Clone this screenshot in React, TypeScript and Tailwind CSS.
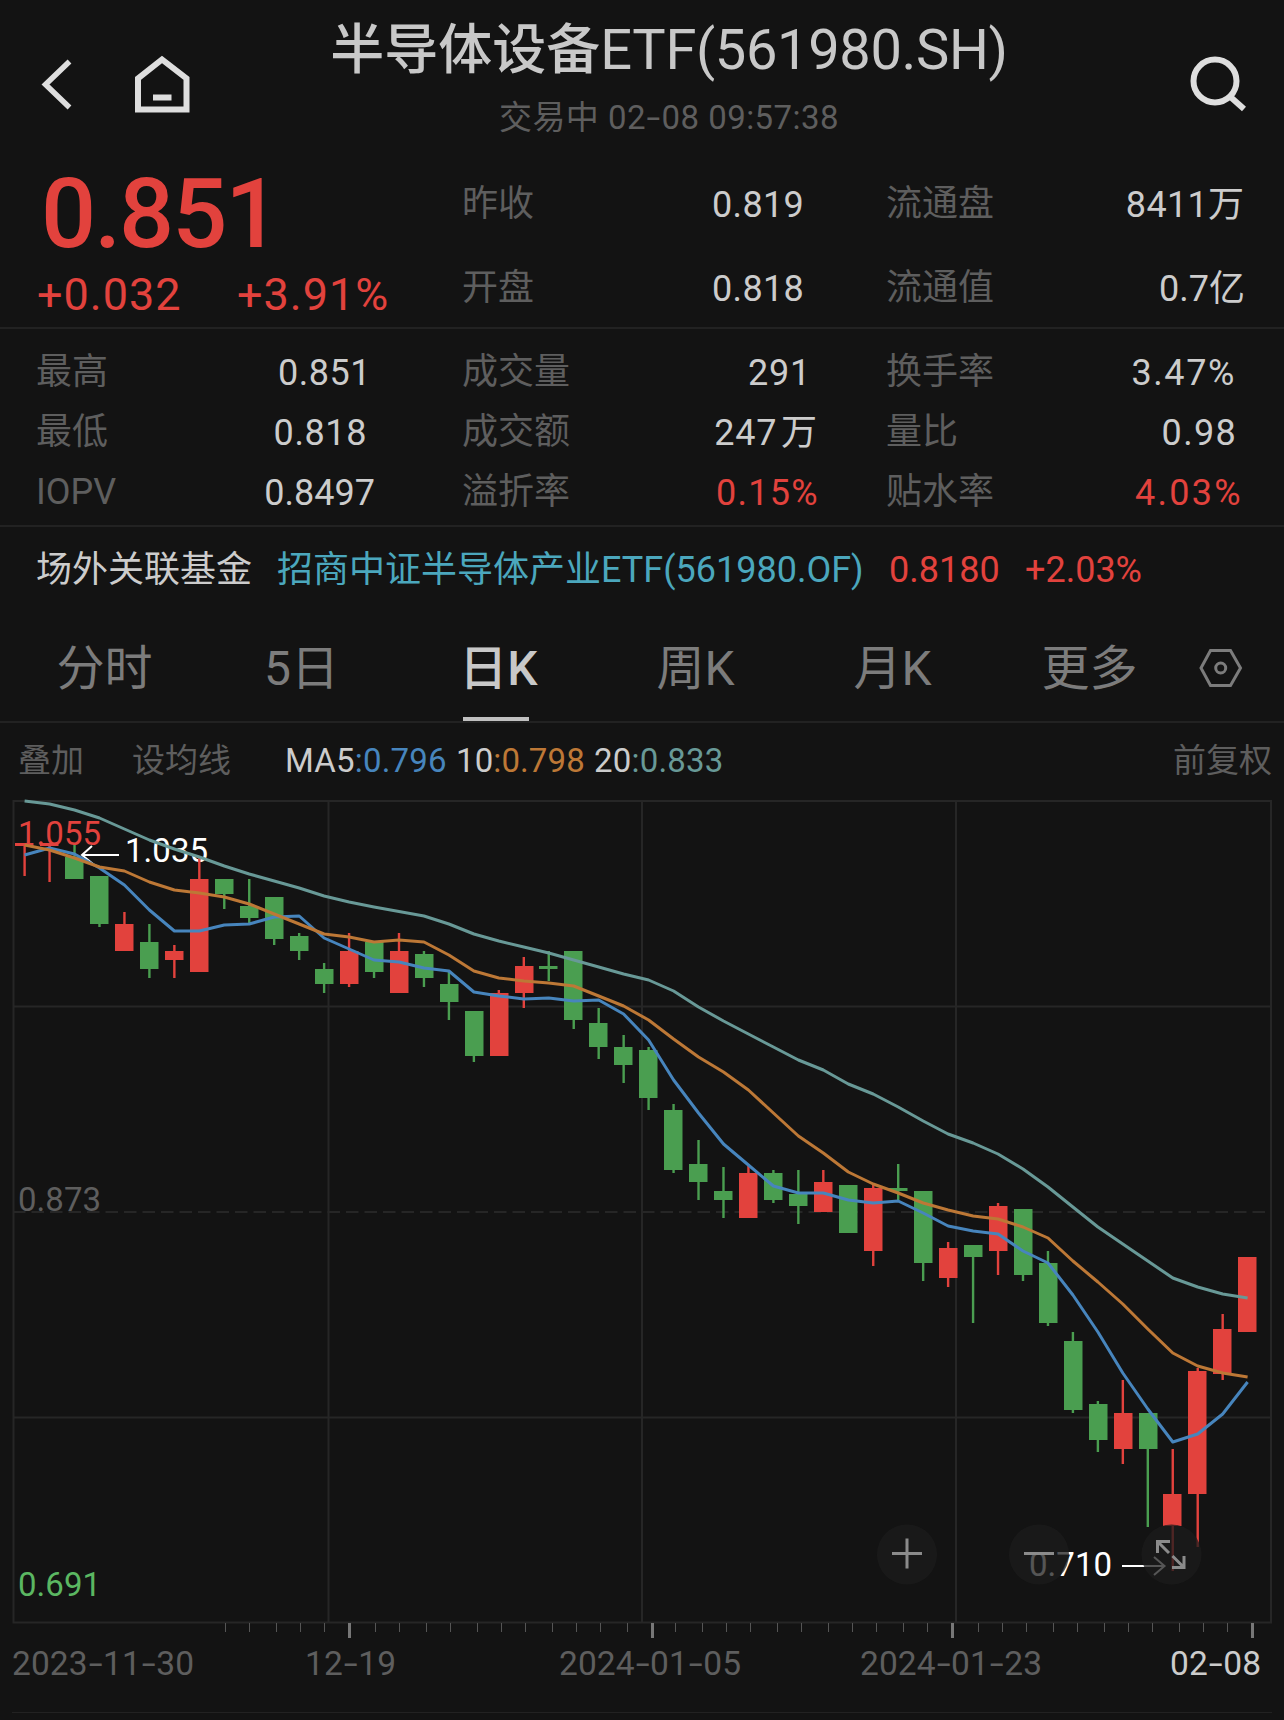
import { Fragment } from "react"

type Candle = [high: number, top: number, bottom: number, low: number, color: "r" | "g"]

const RED = "#e2423d"
const GREEN = "#4a9e50"

const candles: Candle[] = [
  [843, 843, 846, 876, "r"],
  [843, 843, 846, 882, "r"],
  [845, 857, 879, 879, "g"],
  [876, 876, 924, 927, "g"],
  [912, 924, 951, 951, "r"],
  [924, 942, 969, 978, "g"],
  [945, 951, 960, 978, "r"],
  [857, 879, 972, 972, "r"],
  [879, 879, 894, 909, "g"],
  [879, 906, 918, 924, "g"],
  [897, 897, 939, 945, "g"],
  [933, 936, 951, 960, "g"],
  [963, 969, 984, 993, "g"],
  [933, 951, 984, 987, "r"],
  [942, 942, 972, 978, "g"],
  [933, 951, 993, 993, "r"],
  [951, 954, 978, 987, "g"],
  [972, 984, 1002, 1020, "g"],
  [1011, 1011, 1056, 1062, "g"],
  [990, 993, 1056, 1056, "r"],
  [957, 966, 993, 1008, "r"],
  [951, 966, 969, 981, "g"],
  [951, 951, 1020, 1029, "g"],
  [1008, 1023, 1047, 1059, "g"],
  [1035, 1047, 1065, 1083, "g"],
  [1047, 1050, 1098, 1110, "g"],
  [1104, 1110, 1170, 1173, "g"],
  [1140, 1164, 1182, 1200, "g"],
  [1167, 1191, 1200, 1218, "g"],
  [1164, 1173, 1218, 1218, "r"],
  [1170, 1173, 1200, 1203, "g"],
  [1170, 1194, 1206, 1224, "g"],
  [1170, 1182, 1212, 1212, "r"],
  [1185, 1185, 1233, 1233, "g"],
  [1183, 1188, 1251, 1266, "r"],
  [1164, 1188, 1191, 1200, "g"],
  [1191, 1191, 1263, 1281, "g"],
  [1242, 1248, 1278, 1287, "r"],
  [1245, 1245, 1257, 1323, "g"],
  [1203, 1206, 1251, 1275, "r"],
  [1209, 1209, 1275, 1281, "g"],
  [1251, 1263, 1323, 1326, "g"],
  [1332, 1341, 1410, 1413, "g"],
  [1401, 1404, 1440, 1452, "g"],
  [1380, 1413, 1449, 1464, "r"],
  [1413, 1413, 1449, 1527, "g"],
  [1449, 1494, 1526, 1571, "r"],
  [1368, 1371, 1494, 1547, "r"],
  [1314, 1329, 1374, 1380, "r"],
  [1257, 1257, 1332, 1332, "r"],
]

const ma5 = [
  855, 848, 854, 868, 885, 910, 931, 931, 925, 924, 917, 916, 938, 949, 960, 962, 968, 971, 992, 996, 999, 998, 1001,
  1000, 1014, 1040, 1080, 1113, 1144, 1165, 1186, 1193, 1193, 1200, 1203, 1201, 1213, 1226, 1231, 1234, 1251, 1263,
  1295, 1332, 1373, 1409, 1442, 1434, 1414, 1382,
]
const ma10 = [
  845, 850, 858, 867, 871, 882, 890, 893, 897, 904, 914, 924, 934, 937, 942, 940, 942, 955, 971, 978, 981, 983, 986,
  996, 1006, 1020, 1039, 1057, 1072, 1090, 1113, 1136, 1153, 1172, 1184, 1193, 1203, 1210, 1216, 1219, 1227, 1238,
  1261, 1282, 1304, 1329, 1353, 1366, 1373, 1377,
]
const ma20 = [
  801, 804, 810, 818, 829, 840, 849, 857, 866, 874, 881, 888, 896, 902, 907, 911.5, 916, 924, 934, 941, 947, 953, 960,
  967, 974, 980, 991, 1007, 1021, 1034, 1047, 1060, 1070, 1084, 1094, 1107, 1121, 1134, 1143, 1154, 1169, 1187, 1207,
  1227, 1244, 1261, 1278, 1287, 1294, 1298,
]

const ticks = [
  225, 249, 276, 300, 324, 375, 399, 426, 450, 477, 501, 525, 552, 576, 600, 627, 675, 702, 726, 750, 777, 801, 828,
  852, 876, 903, 927, 978, 1002, 1026, 1053, 1077, 1104, 1128, 1152, 1179, 1203, 1227,
]
const bigTicks = [349, 652, 952, 1252]

const xAt = (i: number) => 24.6 + i * 24.96
const toPoints = (ys: number[]) => ys.map((y, i) => `${xAt(i).toFixed(1)},${y}`).join(" ")

const quote = [
  { label: "昨收", value: "0.819", pad: "pr-[82px] tracking-[0.3px]" },
  { label: "流通盘", value: "8411", unit: "万", pad: "pr-[40px] tracking-[0.3px]" },
  { label: "开盘", value: "0.818", pad: "pr-[82px] tracking-[0.3px]" },
  { label: "流通值", value: "0.7", unit: "亿", pad: "pr-[39px]" },
]

const details = [
  { label: "最高", value: "0.851", pad: "pr-[91px] tracking-[0.5px]" },
  { label: "成交量", value: "291", pad: "pr-[75px] tracking-[0.8px]" },
  { label: "换手率", value: "3.47%", pad: "pr-[48px] tracking-[1.6px]" },
  { label: "最低", value: "0.818", pad: "pr-[95px] tracking-[0.6px]" },
  { label: "成交额", value: "247 ", unit: "万", pad: "pr-[69px] tracking-[0.8px] [word-spacing:-6px]" },
  { label: "量比", value: "0.98", pad: "pr-[47px] tracking-[1.3px]" },
  { label: "IOPV", value: "0.8497", pad: "pr-[87px]" },
  { label: "溢折率", value: "0.15%", pad: "pr-[67px] tracking-[1.3px]", up: true },
  { label: "贴水率", value: "4.03%", pad: "pr-[41px] tracking-[2.3px]", up: true },
]

const tabs = ["分时", "5日", "日K", "周K", "月K", "更多"]

type StatProps = { label: string; value: string; unit?: string; pad: string; up?: boolean }

function Stat({ label, value, unit, pad, up }: StatProps) {
  return (
    <div className={`flex items-center justify-between text-[36px] ${pad}`}>
      <span className="tracking-normal text-[#5e5e5e]">{label}</span>
      <span className={`relative top-px ${up ? "text-[#e2423d]" : "text-[#cccccc]"}`}>
        {value}
        {unit && <span className="tracking-normal">{unit}</span>}
      </span>
    </div>
  )
}

// hyphens are drawn wider than the font's own
function DateText({ children }: { children: string }) {
  return (
    <>
      {children.split("-").map((part, i) => (
        <Fragment key={i}>
          {i > 0 && <span className="inline-block scale-x-150 mx-[3px]">-</span>}
          {part}
        </Fragment>
      ))}
    </>
  )
}

function Chart() {
  return (
    <svg className="block w-full h-[840px]" viewBox="0 799 1284 840" fill="none">
      <g stroke="#262626" strokeWidth="2">
        <rect x="13.5" y="801" width="1257.5" height="821.5" />
        <path d="M328.5 801V1622M642 801V1622M956 801V1622M13 1006.5H1271M13 1417.5H1271" />
        <path d="M13 1212H1271" strokeDasharray="12.5 6" />
      </g>
      <g stroke="#555555" strokeWidth="1">
        {ticks.map((x) => (
          <path key={x} d={`M${x + 0.5} 1623V1632`} />
        ))}
      </g>
      <g stroke="#777777" strokeWidth="3">
        {bigTicks.map((x) => (
          <path key={x} d={`M${x + 0.5} 1623V1638`} />
        ))}
      </g>

      <g className="[font-family:Roboto,sans-serif]" fontSize="33">
        <text x="18" y="845" fill={RED} textLength="83">1.055</text>
        <text x="18" y="1211" fill="#5e5e5e" textLength="83">0.873</text>
        <text x="18" y="1596" fill="#5bb762" textLength="83">0.691</text>
        <text x="125" y="862" fill="#ffffff" textLength="83">1.035</text>
        <text x="1029" y="1576" fill="#ffffff" textLength="83">0.710</text>
      </g>
      <path d="M119 855H82M92 846L82 855L93 864" stroke="#ffffff" strokeWidth="2" />
      <path d="M1122 1566H1165M1154 1557L1164.500 1566L1154 1575" stroke="#ffffff" strokeWidth="2" />

      {candles.map(([high, top, bottom, low, color], i) => (
        <g key={i} fill={color === "r" ? RED : GREEN}>
          <rect x={xAt(i) - 1.2} y={high} width="2.4" height={low - high} />
          <rect x={Math.round(xAt(i) - 9.3)} y={top} width="18.5" height={bottom - top} />
        </g>
      ))}

      <g strokeWidth="3" strokeLinejoin="round">
        <polyline points={toPoints(ma5)} stroke="#4785bd" />
        <polyline points={toPoints(ma10)} stroke="#bd7836" />
        <polyline points={toPoints(ma20)} stroke="#689997" />
      </g>

      <g fill="#1c1c1c" fillOpacity="0.75">
        <circle cx="907" cy="1554.500" r="30" />
        <circle cx="1039" cy="1554.500" r="30" />
        <circle cx="1171.500" cy="1554.500" r="30" />
      </g>
      <g stroke="#8b8b8b" strokeWidth="3">
        <path d="M892 1553.500H922M907 1538.500V1568.500" />
        <path d="M1024 1553.500H1054" />
        <path d="M1157.500 1553V1541.500H1170M1157.500 1541.500L1169 1553" />
        <path d="M1184 1556V1567.500H1172M1184 1567.500L1172.500 1556" />
      </g>
    </svg>
  )
}

export default function App() {
  return (
    <div className="w-[1284px] h-[1720px] overflow-hidden bg-[#131313] text-[#cccccc] leading-none whitespace-nowrap [font-family:Roboto,'Noto_Sans_CJK_SC',sans-serif]">
      <header className="flex h-[150px]">
        <div className="w-[331px] shrink-0">
          <svg className="block w-[200px] h-[120px]" viewBox="0 0 200 120" fill="none" stroke="#dedede">
            <path d="M69.500 61.500L45.500 84.500L69.500 107.500" strokeWidth="5.500" />
            <path d="M138 109.500V78.500L162 59.500L186.500 78.500V109.500Z" strokeWidth="6" />
            <path d="M153 97.500H171.500" strokeWidth="6" />
          </svg>
        </div>
        <div className="w-[676px] shrink-0 flex flex-col items-center">
          <h1 className="mt-[23px] text-[54px] leading-[54px] font-medium text-[#c8c8c8]">
            半导体设备<span className="text-[56px] leading-[54px] tracking-[-0.35px] font-normal">ETF(561980.SH)</span>
          </h1>
          <p className="mt-[23px] text-[33px] leading-[33px] tracking-[0.45px] text-[#5e5e5e]">
            交易中 <DateText>02-08</DateText> 09:57:38
          </p>
        </div>
        <svg className="ml-auto mr-[34px] mt-[52px] w-[64px] h-[64px]" viewBox="0 0 64 64" fill="none" stroke="#dedede" strokeWidth="6">
          <circle cx="29" cy="29" r="21.500" />
          <path d="M44 44.500L58 57" />
        </svg>
      </header>

      <section className="flex h-[179px] border-b-2 border-[#222222]">
        <div className="w-[462px] shrink-0 text-[#e2423d]">
          <div className="pl-[41px] pt-[16px] text-[97px] leading-[96px] tracking-[-2px] font-medium">0.851</div>
          <div className="flex pl-[37px] mt-[10px] text-[45px] leading-[45px] tracking-[1px]">
            <span className="w-[200px]">+0.032</span>
            <span>+3.91%</span>
          </div>
        </div>
        <div className="grid grid-cols-[424px_398px] grid-rows-[84px_84px] pt-[12px]">
          {quote.map((s) => (
            <Stat key={s.label} {...s} />
          ))}
        </div>
      </section>

      <section className="h-[198px] pt-[13px] pl-[36px] grid grid-cols-[426px_424px_398px] grid-rows-[60px_60px_60px] border-b-2 border-[#222222]">
        {details.map((s) => (
          <Stat key={s.label} {...s} />
        ))}
      </section>

      <section className="flex items-center h-[84px] pt-[2px] pl-[36px] text-[36px]">
        <span className="w-[241px]">场外关联基金</span>
        <span className="w-[612px] text-[#4ba7bd]">招商中证半导体产业ETF(561980.OF)</span>
        <span className="w-[136px] text-[#e2423d]">0.8180</span>
        <span className="text-[#e2423d]">+2.03%</span>
      </section>

      <nav className="flex h-[112px] border-b-2 border-[#222222] pl-[6px] text-[48px]">
        {tabs.map((tab) => (
          <div
            key={tab}
            className={`relative w-[197px] pt-[34px] text-center ${tab === "日K" ? "text-[#c8c8c8] font-medium" : "text-[#7c7c7c]"}`}
          >
            {tab}
            {tab === "日K" && <span className="absolute left-[63px] bottom-0 w-[66px] h-1 bg-[#c0c0c0]" />}
          </div>
        ))}
        <svg className="ml-[10px] mt-[34px] w-[46px] h-[46px]" viewBox="0 0 46 46" fill="none" stroke="#7c7c7c" strokeWidth="3">
          <path d="M12.500 5.500H32.500L42.500 23L32.500 40.500H12.500L3 23Z" />
          <circle cx="22.700" cy="23" r="5" />
        </svg>
      </nav>

      <div className="flex items-center h-[76px] pl-[18px] pb-px pr-[12px] text-[33px] text-[#5e5e5e]">
        <span className="w-[114px]">叠加</span>
        <span className="w-[153px]">设均线</span>
        <span className="w-[171px] tracking-[0.2px] text-[#cccccc]">
          MA5<span className="text-[#4785bd]">:0.796</span>
        </span>
        <span className="w-[138px] tracking-[0.1px] text-[#cccccc]">
          10<span className="text-[#bd7836]">:0.798</span>
        </span>
        <span className="tracking-[0.2px] text-[#cccccc]">
          20<span className="text-[#689997]">:0.833</span>
        </span>
        <span className="ml-auto">前复权</span>
      </div>

      <Chart />

      <div className="grid grid-cols-[293px_254px_301px_310px_1fr] pl-[12px] h-[73px] pt-[8px] text-[33.5px] leading-[33px] tracking-[0.1px] text-[#5e5e5e]">
        <span><DateText>2023-11-30</DateText></span>
        <span><DateText>12-19</DateText></span>
        <span><DateText>2024-01-05</DateText></span>
        <span><DateText>2024-01-23</DateText></span>
        <span className="text-[#cccccc]"><DateText>02-08</DateText></span>
      </div>
      <div className="mx-[12px] h-px bg-[#222222]" />
    </div>
  )
}
